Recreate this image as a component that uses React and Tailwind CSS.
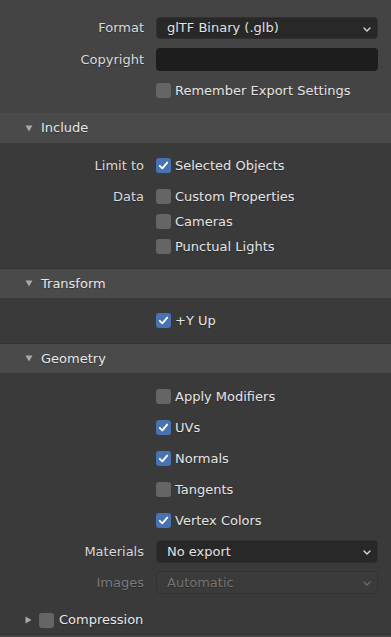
import React from 'react'

const font = { fontFamily: '"DejaVu Sans", "Noto Sans", sans-serif' }

const Check = ({ on }) => (
    <div
        className={
            'w-[15px] h-[15px] rounded-[3px] flex items-center justify-center shrink-0 ' +
            (on ? 'bg-[#4772b3]' : 'bg-[#656565]')
        }
    >
        {on && (
            <svg width="11" height="11" viewBox="0 0 11 11">
                <path d="M1.8 5.8 L4.3 8.3 L9.2 2.6" fill="none" stroke="#ffffff" strokeWidth="1.9" strokeLinecap="round" strokeLinejoin="round" />
            </svg>
        )}
    </div>
)

const Chevron = ({ dim }) => (
    <svg width="8" height="5" viewBox="0 0 8 5" className="absolute right-[6px] top-[9px]">
        <path d="M1 1 L4 4 L7 1" fill="none" stroke={dim ? '#6a6a6a' : '#d8d8d8'} strokeWidth="1.4" strokeLinecap="round" />
    </svg>
)

const Row = ({ label, dim, children, h = 'h-[25px]' }) => (
    <div className={'flex items-center ' + h}>
        <div className={'w-[144px] text-right shrink-0 ' + (dim ? 'text-[#7b7b7b]' : 'text-[#d9d9d9]')}>{label}</div>
        <div className="ml-[12px] mr-[13px] flex-1 flex items-center h-full">{children}</div>
    </div>
)

const CheckRow = ({ label, text, on }) => (
    <Row label={label}>
        <Check on={on} />
        <span className="ml-[4px] text-[#e4e4e4]">{text}</span>
    </Row>
)

const Select = ({ value, dim }) => (
    <div
        className={
            'relative w-full h-full rounded-[4px] flex items-center pl-[10px] ' +
            (dim ? 'bg-[#3b3b3b] border border-[#333333] text-[#747474]' : 'bg-[#282828] border border-[#303030] text-[#e2e2e2]')
        }
    >
        {value}
        <Chevron dim={dim} />
    </div>
)

const Header = ({ title, line }) => (
    <div className={'h-[30px] bg-[#4a4a4a] flex items-center ' + (line ? 'border-t border-[#333333]' : '')}>
        <svg width="8" height="7" viewBox="0 0 8 7" className="ml-[25px]">
            <path d="M0.5 0.5 L7.5 0.5 L4 6.5 Z" fill="#a8a8a8" />
        </svg>
        <span className="ml-[8px] text-[#e6e6e6]">{title}</span>
    </div>
)

export default function App() {
    return (
        <div
            className="w-[391px] h-[637px] bg-[#444444] text-[13px] overflow-hidden [text-shadow:0_1px_1px_rgba(0,0,0,0.3)]"
            style={font}
        >
            <div className="pt-[17px] h-[113px] flex flex-col">
                <Row label="Format" h="h-[22px]">
                    <Select value="glTF Binary (.glb)" />
                </Row>
                <div className="h-[9px]" />
                <Row label="Copyright" h="h-[23px]">
                    <div className="w-full h-full rounded-[4px] bg-[#1d1d1d]" />
                </Row>
                <div className="h-[7px]" />
                <CheckRow text="Remember Export Settings" />
            </div>

            <Header title="Include" />
            <div className="bg-[#3a3a3a] pt-[10px] pb-[9px] flex flex-col">
                <CheckRow label="Limit to" text="Selected Objects" on />
                <div className="h-[6px]" />
                <CheckRow label="Data" text="Custom Properties" />
                <CheckRow text="Cameras" />
                <CheckRow text="Punctual Lights" />
            </div>

            <Header title="Transform" line />
            <div className="bg-[#3a3a3a] pt-[10px] pb-[10px]">
                <CheckRow text="+Y Up" on />
            </div>

            <Header title="Geometry" line />
            <div className="bg-[#3a3a3a] pt-[11px] flex flex-col gap-[6px]">
                <CheckRow text="Apply Modifiers" />
                <CheckRow text="UVs" on />
                <CheckRow text="Normals" on />
                <CheckRow text="Tangents" />
                <CheckRow text="Vertex Colors" on />
            </div>
            <div className="bg-[#3a3a3a] pt-[7px] flex flex-col gap-[8px]">
                <Row label="Materials" h="h-[23px]">
                    <Select value="No export" />
                </Row>
                <Row label="Images" dim h="h-[23px]">
                    <Select value="Automatic" dim />
                </Row>
            </div>
            <div className="bg-[#3a3a3a] pt-[13px] pb-[1px] border-b border-[#333333]">
                <div className="h-[26px] flex items-center">
                    <svg width="7" height="8" viewBox="0 0 7 8" className="ml-[25px]">
                        <path d="M0.5 0.5 L6.5 4 L0.5 7.5 Z" fill="#a8a8a8" />
                    </svg>
                    <div className="ml-[7px]">
                        <Check />
                    </div>
                    <span className="ml-[5px] text-[#e6e6e6]">Compression</span>
                </div>
            </div>
        </div>
    )
}
